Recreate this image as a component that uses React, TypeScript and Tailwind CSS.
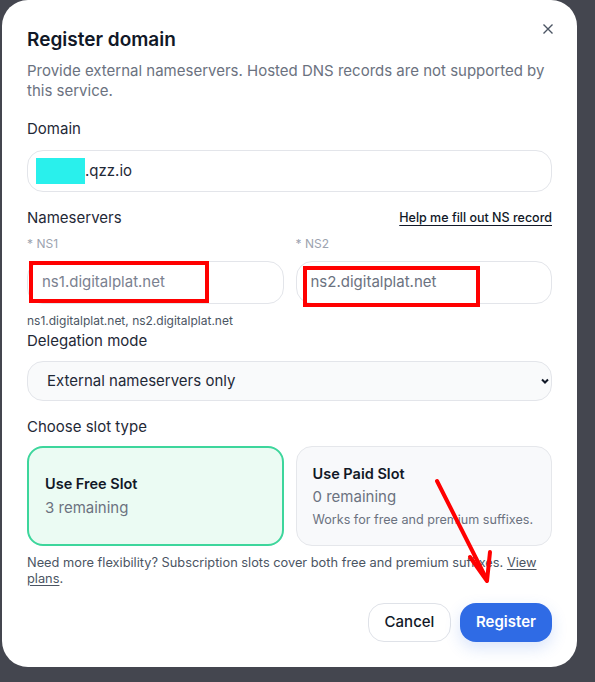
import React from "react";

const font = { fontFamily: "Inter, 'Noto Sans', sans-serif" };

const Field: React.FC<{ value: string; className?: string }> = ({ value, className }) => (
  <div
    className={`flex h-[43px] items-center rounded-2xl border border-[#e3e5ea] bg-white px-[14px] text-[15px] text-[#6b7280] ${className ?? ""}`}
  >
    {value}
  </div>
);

export default function App() {
  return (
    <div className="relative h-[682px] w-[595px] overflow-hidden bg-[#44464f]" style={font}>
      <div className="relative ml-[2px] w-[575px] rounded-[26px] bg-white px-[25px] pb-[25px] pt-[26px]">
        {/* close */}
        <button className="absolute right-[23px] top-[23px] text-[#4b5563]">
          <svg width="12" height="12" viewBox="0 0 12 12" fill="none" stroke="currentColor" strokeWidth="1.4">
            <path d="M1.5 1.5l9 9M10.5 1.5l-9 9" />
          </svg>
        </button>

        <h1 className="text-[19px] font-semibold leading-[28px] text-[#111827]">Register domain</h1>
        <p className="mt-[7px] text-[15px] leading-[20px] text-[#6b7280]">
          Provide external nameservers. Hosted DNS records are not supported by this service.
        </p>

        <div className="mt-[18px] text-[15px] leading-[20px] text-[#1f2937]">Domain</div>
        <div className="mt-[11px] flex h-[42px] items-center rounded-2xl border border-[#e3e5ea] bg-white pl-[8px] text-[15px] text-[#1f2937]">
          <span className="h-[26px] w-[49px] bg-[#29f0ec]" />
          <span>.qzz.io</span>
        </div>

        <div className="mt-[16px] flex items-center justify-between leading-[20px]">
          <span className="text-[15px] text-[#1f2937]">Nameservers</span>
          <a className="text-[12.5px] font-medium text-[#111827] underline underline-offset-[3px]">
            Help me fill out NS record
          </a>
        </div>

        <div className="mt-[8px] grid grid-cols-2 gap-x-[12px]">
          <div>
            <div className="text-[12px] leading-[16px] text-[#9ca3af]">* NS1</div>
            <Field value="ns1.digitalplat.net" className="mt-[9px] text-[#7b8190]" />
          </div>
          <div>
            <div className="text-[12px] leading-[16px] text-[#9ca3af]">* NS2</div>
            <Field value="ns2.digitalplat.net" className="mt-[9px]" />
          </div>
        </div>

        <div className="mt-[9px] text-[12px] leading-[16px] text-[#4b5563]">
          ns1.digitalplat.net, ns2.digitalplat.net
        </div>

        <div className="mt-[2px] text-[15px] leading-[20px] text-[#1f2937]">Delegation mode</div>
        <div className="mt-[10px] flex h-[40px] items-center justify-between rounded-2xl border border-[#e3e5ea] bg-[#f9fafb] pl-[19px] pr-[1px] text-[15px] text-[#1f2937]">
          <span>External nameservers only</span>
          <svg width="10" height="10" viewBox="0 0 10 10" fill="none" stroke="#111827" strokeWidth="2">
            <path d="M2 3.5l3 3 3-3" />
          </svg>
        </div>

        <div className="mt-[16px] text-[15px] leading-[20px] text-[#1f2937]">Choose slot type</div>
        <div className="mt-[9px] grid grid-cols-2 gap-x-[12px]">
          <div className="flex h-[100px] flex-col justify-center rounded-2xl border-2 border-[#3dd69c] bg-[#ebfbf3] px-[16px]">
            <div className="text-[14.5px] font-semibold leading-[20px] text-[#111827]">Use Free Slot</div>
            <div className="mt-[4px] text-[15px] leading-[20px] text-[#6b7280]">3 remaining</div>
          </div>
          <div className="flex h-[100px] flex-col justify-center rounded-2xl border border-[#e5e7eb] bg-[#f8f9fb] px-[16px]">
            <div className="text-[14.5px] font-semibold leading-[20px] text-[#111827]">Use Paid Slot</div>
            <div className="mt-[3px] text-[15px] leading-[20px] text-[#6b7280]">0 remaining</div>
            <div className="mt-[5px] text-[12.6px] leading-[16px] text-[#6b7280]">
              Works for free and premium suffixes.
            </div>
          </div>
        </div>

        <p className="mt-[9px] text-[12.8px] leading-[16px] text-[#4b5563]">
          Need more flexibility? Subscription slots cover both free and premium suffixes.{" "}
          <a className="underline underline-offset-2">View plans</a>.
        </p>

        <div className="mt-[16px] flex justify-end gap-[9px]">
          <button className="h-[39px] w-[83px] rounded-2xl border border-[#dfe2e8] bg-white text-[15px] font-medium text-[#111827]">
            Cancel
          </button>
          <button className="h-[39px] w-[92px] rounded-2xl bg-[#2f6be5] text-[15px] font-semibold text-white shadow-[0_6px_16px_rgba(47,107,229,0.18)]">
            Register
          </button>
        </div>
      </div>

      {/* annotations */}
      <div className="pointer-events-none absolute left-[29px] top-[261px] h-[42px] w-[180px] border-[4px] border-[#ff0000]" />
      <div className="pointer-events-none absolute left-[303px] top-[266px] h-[41px] w-[177px] border-[4px] border-[#ff0000]" />
      <svg className="pointer-events-none absolute left-0 top-0" width="595" height="682">
        <path d="M437 481 L485 576" stroke="#ff0000" strokeWidth="4" strokeLinecap="round" />
        <path d="M487 581 L470 557 M487 581 L490 552" stroke="#ff0000" strokeWidth="4" strokeLinecap="round" />
      </svg>
    </div>
  );
}
